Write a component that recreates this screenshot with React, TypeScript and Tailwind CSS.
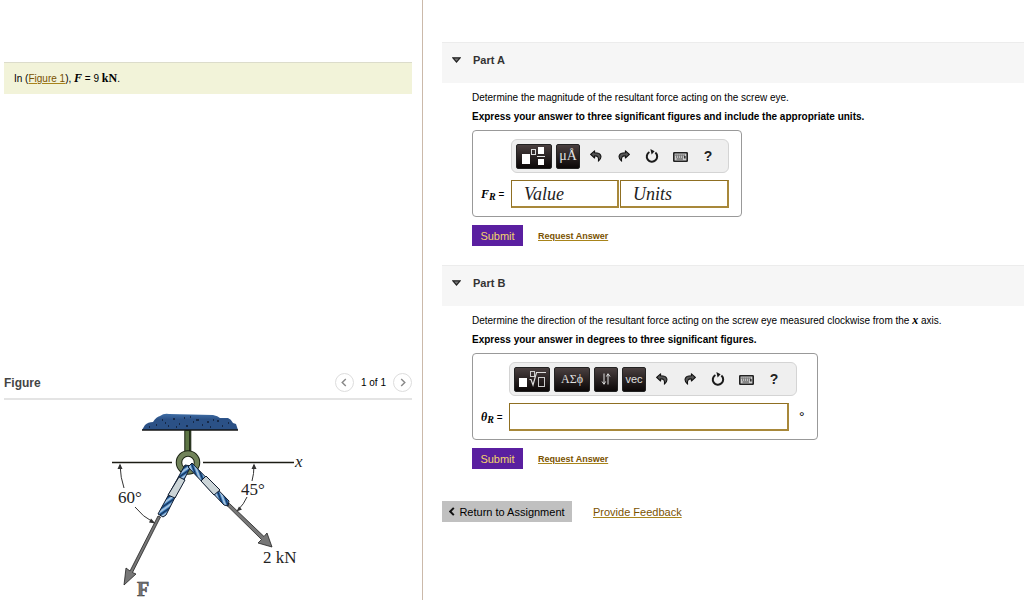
import { ReactNode, useState } from 'react';

const linkClass = 'text-[#7a5200] underline decoration-[#a8841a]';
const inputClass =
  'h-7 min-w-0 border border-r-2 border-b-2 border-[#8f6f22] border-r-[#a8883a] border-b-[#a8883a] bg-white px-3 font-["Liberation_Serif","Noto_Serif",serif] text-lg italic text-black placeholder:text-[#222] placeholder:opacity-100';

const UndoIcon = ({ flip = false }: { flip?: boolean }) => (
  <svg viewBox="0 0 12 12" className={`h-3 w-3 ${flip ? '-scale-x-100' : ''}`}>
    <path
      d="M4.6 0.8 L0.6 4.4 L4.6 8 V5.9 C7.6 5.6 9 7.4 8.4 11.2 C12.4 7.6 12 2.8 4.6 2.8 Z"
      fill="#555"
      stroke="#111"
      strokeWidth="1.1"
      strokeLinejoin="round"
    />
  </svg>
);

const ResetIcon = () => (
  <svg viewBox="0 0 14 14" className="h-[14px] w-[14px]" fill="none">
    <path d="M4.4 3 A5.2 5.2 0 1 0 10.4 3.6" stroke="#1a1a1a" strokeWidth="2" />
    <path d="M5.4 0 L9.6 2.2 L6.6 5.6 Z" fill="#1a1a1a" />
  </svg>
);

const KeyboardIcon = () => (
  <svg viewBox="0 0 15 10" className="mt-0.5 h-[10px] w-[15px]">
    <rect x="0.8" y="0.8" width="13.4" height="8.4" rx="0.5" fill="#ccc" stroke="#222" strokeWidth="1.6" />
    <path d="M2.5 3.2 H12.5 M3 5 H10.5" stroke="#333" strokeWidth="1.2" strokeDasharray="1.2 0.8" />
    <path d="M3.5 7 H10" stroke="#444" strokeWidth="1" />
    <path d="M11 4 H12.6 V6.4 H11 Z" fill="#333" />
  </svg>
);

const TemplateIcon = () => (
  <svg viewBox="0 0 26 20" className="h-5 w-[26px]">
    <rect x="1" y="8" width="8" height="10" fill="#fff" />
    <rect x="10.5" y="3.5" width="4" height="5" fill="none" stroke="#ddd" />
    <rect x="17" y="1" width="6" height="7" fill="#fff" />
    <path d="M16 10.5 H24" stroke="#ddd" strokeWidth="1" />
    <rect x="17" y="13" width="6" height="6" fill="#fff" />
  </svg>
);

const RootIcon = () => (
  <svg viewBox="0 0 28 20" className="h-5 w-7" fill="none">
    <rect x="1" y="9" width="8" height="9" fill="#fff" />
    <rect x="12.5" y="2.5" width="4" height="5" stroke="#ccc" />
    <path d="M11.5 10.5 H13 L15 16 L18.5 3.5 H28" stroke="#ddd" strokeWidth="1.2" />
    <rect x="20.5" y="8.5" width="6" height="9" stroke="#ccc" />
  </svg>
);

const ArrowsIcon = () => (
  <svg viewBox="0 0 10 14" className="h-[14px] w-[10px]" fill="none" stroke="#ddd" strokeWidth="1">
    <path d="M3 1.5 V12 M1 9.5 L3 12.3 L4.6 9.5" />
    <path d="M7 12.5 V2 M5.4 4.5 L7 1.7 L9 4.5" />
  </svg>
);

const DarkButton = ({ label, wide, children }: { label: string; wide?: boolean; children: ReactNode }) => (
  <button
    type="button"
    aria-label={label}
    className={`flex h-[25px] items-center justify-center rounded-xs border border-[#222] bg-linear-to-b from-[#4a4040] to-[#0c0808] text-[#e0e0e0] ${
      wide ? 'w-9' : 'w-6'
    }`}
  >
    {children}
  </button>
);

const ToolButtons = () => {
  const tools = [
    { label: 'Undo', icon: <UndoIcon /> },
    { label: 'Redo', icon: <UndoIcon flip /> },
    { label: 'Reset', icon: <ResetIcon /> },
    { label: 'Keyboard shortcuts', icon: <KeyboardIcon /> },
    { label: 'Help', icon: <span className="text-sm font-bold text-[#222]">?</span> },
  ];
  return (
    <div className="-ml-0.5 flex">
      {tools.map((tool) => (
        <button key={tool.label} type="button" aria-label={tool.label} className="flex h-6 w-7 items-center justify-center">
          {tool.icon}
        </button>
      ))}
    </div>
  );
};

const Part = ({ title, children }: { title: string; children: ReactNode }) => {
  const [open, setOpen] = useState(true);
  return (
    <section className="mb-[19px]">
      <h2 className="border-t border-[#ececec] bg-[#f6f6f6]">
        <button
          type="button"
          onClick={() => setOpen(!open)}
          className="flex h-10 w-full items-center gap-3 pb-1.5 pl-2.5 text-left text-[11px] font-bold text-[#333]"
        >
          <svg viewBox="0 0 9 6" className="h-1.5 w-[9px]">
            <path d="M0.8 0.8 H8.2 L4.5 5 Z" fill="#777" stroke="#222" strokeWidth="1.2" />
          </svg>
          {title}
        </button>
      </h2>
      {open && <div className="pt-[7px] pl-[30px]">{children}</div>}
    </section>
  );
};

const SubmitRow = () => (
  <div className="mt-2 flex items-center gap-[15px]">
    <button type="submit" className="h-[21px] w-[51px] bg-[#5a1fa0] text-[11px] text-[#f3d36b]">
      Submit
    </button>
    <a href="#answer" className={`text-[9px] font-bold ${linkClass}`}>
      Request Answer
    </a>
  </div>
);

const FigureDrawing = () => (
  <svg viewBox="100 404 216 196" className="mx-auto mt-1 h-[196px] w-[216px]" role="img" aria-label="Screw eye with two forces">
    <defs>
      <linearGradient id="ceiling" x1="0" y1="0" x2="0" y2="1">
        <stop offset="0" stopColor="#3f6ea6" />
        <stop offset="0.35" stopColor="#2b5186" />
        <stop offset="1" stopColor="#2b5186" />
      </linearGradient>
      <pattern id="rope" width="5" height="5" patternUnits="userSpaceOnUse" patternTransform="rotate(-35)">
        <rect width="5" height="5" fill="#2f6fb0" />
        <path d="M0 1 H5" stroke="#d4e6f5" strokeWidth="1.4" />
        <path d="M0 3.6 H5" stroke="#12284a" strokeWidth="1" />
      </pattern>
      <pattern id="ropeRight" width="5" height="5" patternUnits="userSpaceOnUse" patternTransform="rotate(70)">
        <rect width="5" height="5" fill="#2f6fb0" />
        <path d="M0 1 H5" stroke="#d4e6f5" strokeWidth="1.4" />
        <path d="M0 3.6 H5" stroke="#12284a" strokeWidth="1" />
      </pattern>
    </defs>

    {/* Ceiling */}
    <path
      d="M142 430 L145 425 Q148 422 153 422 Q156 417 160 416 Q164 413 169 414 L213 415 Q218 416 220 418 L228 418 Q231 419 233 423 L236 424 L238 430 Z"
      fill="url(#ceiling)"
    />
    <path
      d="M156 425h1M162 420h1M168 426h1M173 419h2M179 424h1M184 418h1M186 426h2M193 422h1M196 420h3M202 425h1M207 422h2M213 420h1M217 421h2M222 426h1M228 423h1M149 427h1M176 427h1M210 427h1M165 423h1M190 417h1"
      stroke="#101c34"
      strokeWidth="1.3"
    />
    <path d="M142 430 H238" stroke="#151515" strokeWidth="1.5" />

    {/* Screw eye */}
    <rect x="184.8" y="430.5" width="6" height="23" fill="#5d7544" stroke="#1c2414" />
    <path d="M189.8 431 V453" stroke="#222c18" strokeWidth="1.5" />
    <circle cx="188" cy="462.5" r="9" fill="none" stroke="#1c2414" strokeWidth="6.5" />
    <circle cx="188" cy="462.5" r="9" fill="none" stroke="#71835a" strokeWidth="4.5" />

    <path d="M112 462.5 H172 M203 462.5 H294" stroke="#1c1c14" strokeWidth="1.5" />

    {/* Force arrows */}
    <g fill="#777" stroke="#222" strokeWidth="0.8">
      <path d="M158 516 L130 571 L126 568 L124 585 L136 574 L132.5 572.5 L160.5 517 Z" />
      <path d="M229.5 503.5 L264 536.5 L267 533 L272 547 L258 543 L261.5 539.5 L227 505.5 Z" />
    </g>

    {/* Ropes */}
    <g stroke="#111d30" strokeWidth="1">
      <path d="M185 465 L191 466 L166 515 L163 517 L158 514 Z" fill="url(#rope)" />
      <path d="M188 467 L192 463 L229 501 L228 506 L224 505 Z" fill="url(#ropeRight)" />
      <path d="M179 477 L185 480 L175 498 L168 495 Z" fill="#ccd5d8" />
      <path d="M201 481 L206 476 L220 490 L214 495 Z" fill="#ccd5d8" />
    </g>

    {/* Angle arcs */}
    <g fill="none" stroke="#333" strokeWidth="1">
      <path d="M120 465 Q120.5 478 124 488 M135 507 Q143 517 153 522" />
      <path d="M254 465 Q254 474 252 481 M247 497 Q244 504 238 510" />
    </g>
    <g fill="#333">
      <path d="M120 463.5 L117.5 469 H122.5 Z M155.5 523.5 L151 518.5 L149 522.5 Z" />
      <path d="M254 463.5 L251.5 469 H256.5 Z M236.5 511.5 L239 506.5 L242 509.5 Z" />
    </g>

    <g className='font-["Liberation_Serif",serif]' fill="#222" fontSize="17">
      <text x="118" y="503">60°</text>
      <text x="241" y="495">45°</text>
      <text x="263" y="563">2 kN</text>
      <text x="295" y="467" fontStyle="italic">x</text>
      <text x="137" y="596" fontSize="20" fontWeight="bold" fill="#777" stroke="#333" strokeWidth="0.5">F</text>
    </g>
  </svg>
);

const App = () => {
  return (
    <div className='grid min-h-screen grid-cols-[423fr_601fr] bg-white font-["Liberation_Sans",Arial,sans-serif] text-[10px] leading-4 text-black'>
      <aside className="flex flex-col border-r border-[#cbb9aa] pr-2.5 pl-1">
        <p className="mt-[62px] h-8 border-t border-[#dcdccb] bg-[#f2f3d9] px-2.5 pt-[7px]">
          In (<a href="#figure" className={linkClass}>Figure 1</a>),{' '}
          <span className='font-["Liberation_Serif",serif] text-xs font-bold italic'>F</span> = 9{' '}
          <span className='font-["Liberation_Serif",serif] text-xs font-bold'>kN</span>.
        </p>

        <div id="figure" className="mt-auto">
          <div className="flex items-center justify-between border-b-2 border-[#e4e4e4] pb-1.5">
            <h2 className="text-xs font-bold text-[#444]">Figure</h2>
            <div className="flex items-center gap-[7px]">
              <button type="button" aria-label="Previous figure" className="flex h-[19px] w-[19px] items-center justify-center rounded-full border border-[#ddd]">
                <svg viewBox="0 0 6 10" className="h-[9px] w-[6px]" fill="none" stroke="#888" strokeWidth="1.6">
                  <path d="M5 1 L1 5 L5 9" />
                </svg>
              </button>
              <span>1 of 1</span>
              <button type="button" aria-label="Next figure" className="flex h-[19px] w-[19px] items-center justify-center rounded-full border border-[#ddd]">
                <svg viewBox="0 0 6 10" className="h-[9px] w-[6px]" fill="none" stroke="#888" strokeWidth="1.6">
                  <path d="M1 1 L5 5 L1 9" />
                </svg>
              </button>
            </div>
          </div>
          <FigureDrawing />
        </div>
      </aside>

      <main className="pt-[42px] pl-[19px]">
        <Part title="Part A">
          <p>Determine the magnitude of the resultant force acting on the screw eye.</p>
          <p className="mt-[3px] font-bold">
            Express your answer to three significant figures and include the appropriate units.
          </p>
          <form onSubmit={(e) => e.preventDefault()}>
            <div className="mt-[5px] w-fit rounded-sm border border-[#999] pt-2 pr-3 pb-2 pl-2">
              <div className="ml-[30px] flex h-[34px] w-[218px] items-center gap-1 rounded-md border border-[#d4d4d4] bg-[#efefef] px-1">
                <DarkButton label="Templates" wide>
                  <TemplateIcon />
                </DarkButton>
                <DarkButton label="Units">
                  <span className='font-["Liberation_Serif",serif] text-sm'>μÅ</span>
                </DarkButton>
                <ToolButtons />
              </div>
              <div className="mt-[7px] flex items-center">
                <label htmlFor="value" className="w-[30px] whitespace-nowrap">
                  <span className='font-["Liberation_Serif",serif] text-xs font-bold italic'>
                    F<sub className="text-[10px]">R</sub>
                  </span>{' '}
                  =
                </label>
                <input id="value" placeholder="Value" className={`w-[108px] ${inputClass}`} />
                <input aria-label="Units" placeholder="Units" className={`ml-px w-[109px] ${inputClass}`} />
              </div>
            </div>
            <SubmitRow />
          </form>
        </Part>

        <Part title="Part B">
          <p>
            Determine the direction of the resultant force acting on the screw eye measured clockwise from the{' '}
            <span className='font-["Liberation_Serif",serif] text-xs font-bold italic leading-none'>x</span> axis.
          </p>
          <p className="mt-[3px] font-bold">Express your answer in degrees to three significant figures.</p>
          <form onSubmit={(e) => e.preventDefault()}>
            <div className="mt-[5px] w-fit rounded-sm border border-[#999] pt-2 pr-3 pb-2 pl-2">
              <div className="ml-7 flex h-[34px] w-[288px] items-center gap-1 rounded-md border border-[#d4d4d4] bg-[#efefef] px-1">
                <DarkButton label="Math templates" wide>
                  <RootIcon />
                </DarkButton>
                <DarkButton label="Greek letters" wide>
                  <span className='font-["Liberation_Serif",serif] text-xs'>ΑΣϕ</span>
                </DarkButton>
                <DarkButton label="Arrows">
                  <ArrowsIcon />
                </DarkButton>
                <DarkButton label="Vector">
                  <span className="text-[11px]">vec</span>
                </DarkButton>
                <ToolButtons />
              </div>
              <div className="mt-[7px] flex items-center">
                <label htmlFor="theta" className="w-7 whitespace-nowrap">
                  <span className='font-["Liberation_Serif",serif] text-xs font-bold italic'>
                    θ<sub className="text-[10px]">R</sub>
                  </span>{' '}
                  =
                </label>
                <input id="theta" className={`w-[280px] ${inputClass}`} />
                <span className="ml-2.5 text-sm">°</span>
              </div>
            </div>
            <SubmitRow />
          </form>
        </Part>

        <div className="mt-8 flex items-center gap-[21px] text-[11px]">
          <button type="button" className="flex h-[21px] w-[130px] items-center justify-center gap-1 bg-[#c0c0c0]">
            <svg viewBox="0 0 6 10" className="h-[9px] w-[6px]" fill="none" stroke="#111" strokeWidth="2.2">
              <path d="M5 1 L1 5 L5 9" />
            </svg>
            Return to Assignment
          </button>
          <a href="#feedback" className={linkClass}>
            Provide Feedback
          </a>
        </div>
      </main>
    </div>
  );
};

export default App;
